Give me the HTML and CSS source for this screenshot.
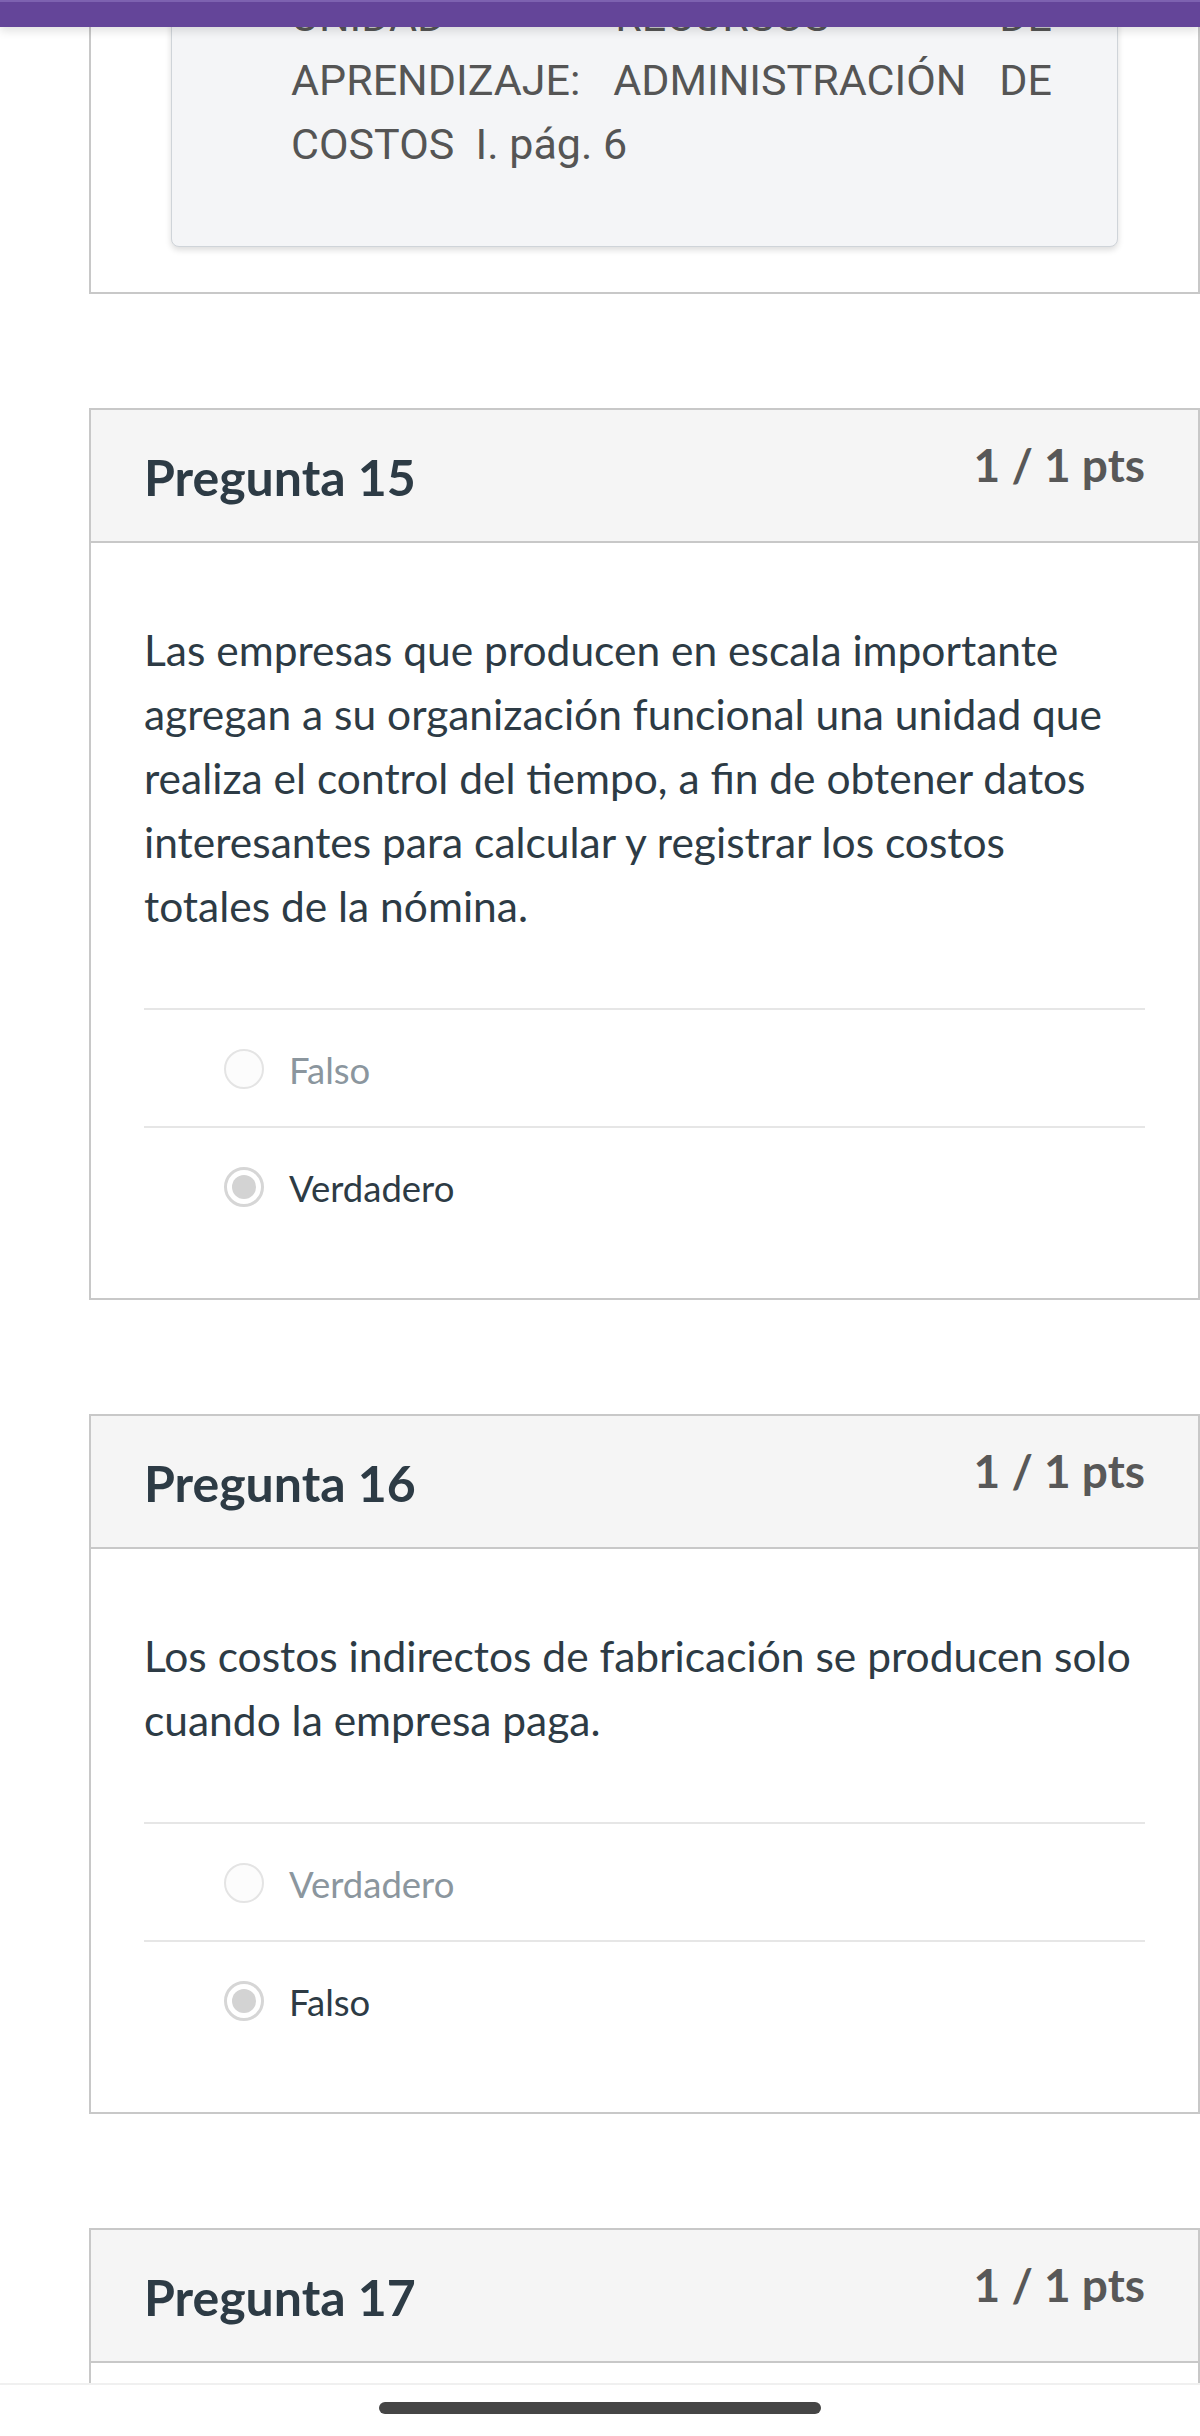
FILE: index.html
```html
<!DOCTYPE html>
<html lang="es">
<head>
<meta charset="utf-8">
<title>Cuestionario</title>
<link rel="stylesheet" href="styles.css">
</head>
<body>
<div class="topbar"></div>
<main class="page">
  <section class="card card-prev">
    <div class="callout">
      <p class="ref-text">
        <span class="ref-line">UNIDAD RECURSOS DE</span>
        <span class="ref-line">APRENDIZAJE: ADMINISTRACIÓN DE</span>
        <span class="ref-line last">COSTOS&nbsp; I. pág. 6</span>
      </p>
    </div>
  </section>

  <section class="card">
    <header class="q-head">
      <h2 class="q-title">Pregunta 15</h2>
      <span class="q-pts">1 / 1 pts</span>
    </header>
    <div class="q-body">
      <p class="q-text">Las empresas que producen en escala importante agregan a su organización funcional una unidad que realiza el control del tiempo, a fin de obtener datos interesantes para calcular y registrar los costos<br>totales de la nómina.</p>
      <div class="answers">
        <div class="answer"><span class="radio"></span><span class="label">Falso</span></div>
        <div class="answer selected"><span class="radio"></span><span class="label">Verdadero</span></div>
      </div>
    </div>
  </section>

  <section class="card">
    <header class="q-head">
      <h2 class="q-title">Pregunta 16</h2>
      <span class="q-pts">1 / 1 pts</span>
    </header>
    <div class="q-body">
      <p class="q-text">Los costos indirectos de fabricación se producen solo cuando la empresa paga.</p>
      <div class="answers">
        <div class="answer"><span class="radio"></span><span class="label">Verdadero</span></div>
        <div class="answer selected"><span class="radio"></span><span class="label">Falso</span></div>
      </div>
    </div>
  </section>

  <section class="card">
    <header class="q-head">
      <h2 class="q-title">Pregunta 17</h2>
      <span class="q-pts">1 / 1 pts</span>
    </header>
    <div class="q-body">
      <p class="q-text">&nbsp;</p>
    </div>
  </section>
</main>
<div class="navbar"><span class="pill"></span></div>
</body>
</html>
```

FILE: styles.css
```css
html, body {
  margin: 0;
  padding: 0;
  height: 2436px;
  overflow: hidden;
  background: #ffffff;
}

body {
  position: relative;
  font-family: Lato, "Open Sans", "Liberation Sans", sans-serif;
  color: #2d3b45;
}

.topbar {
  position: absolute;
  top: 0;
  left: 0;
  right: 0;
  height: 27px;
  background: #644599;
  border-top: 2px solid #7d62b0;
  box-sizing: border-box;
  box-shadow: 0 4px 10px rgba(0, 0, 0, 0.12);
  z-index: 5;
}

.page {
  padding-left: 89px;
}

.card {
  box-sizing: border-box;
  width: 1111px;
  border: 2px solid #c8c8c8;
  background: #ffffff;
}

.card + .card {
  margin-top: 114px;
}

.card-prev {
  margin-top: -60px;
  padding: 0 53px 45px;
}

.callout {
  margin: 0 27px;
  padding: 41px 65px 70px 119px;
  background: #f4f5f7;
  border: 1px solid #cfd4d9;
  border-radius: 8px;
  box-shadow: 0 3px 6px rgba(0, 0, 0, 0.14);
}

.ref-text {
  margin: 0;
  font-family: Roboto, "Liberation Sans", sans-serif;
  font-size: 43px;
  line-height: 64px;
  color: #555555;
}

.ref-line {
  display: block;
  text-align: justify;
  text-align-last: justify;
}

.ref-line.last {
  text-align-last: left;
}

.q-head {
  box-sizing: border-box;
  height: 133px;
  display: flex;
  justify-content: space-between;
  align-items: flex-start;
  padding: 24px 53px 0 53px;
  background: #f5f5f5;
  border-bottom: 2px solid #c8c8c8;
}

.q-title {
  margin: 13px 0 0;
  font-size: 50px;
  line-height: 60px;
  font-weight: 700;
  color: #2d3b45;
}

.q-pts {
  margin-top: 1px;
  font-size: 46px;
  line-height: 60px;
  font-weight: 700;
  color: #585858;
}

.q-body {
  padding: 75px 53px 54px;
}

.q-text {
  margin: 0 0 70px;
  font-size: 42.5px;
  line-height: 64px;
  color: #2d3b45;
}

.answer {
  box-sizing: border-box;
  height: 118px;
  display: flex;
  align-items: flex-start;
  padding-left: 80px;
  border-top: 2px solid #e6e6e6;
}

.radio {
  box-sizing: border-box;
  flex: none;
  width: 40px;
  height: 40px;
  margin-top: 39px;
  border-radius: 50%;
  border: 2px solid #e4e4e4;
  background: #fcfcfc;
  position: relative;
}

.answer.selected .radio {
  border: 3px solid #d6d6d6;
  background: #ffffff;
}

.answer.selected .radio::after {
  content: "";
  position: absolute;
  left: 5px;
  top: 5px;
  width: 24px;
  height: 24px;
  border-radius: 50%;
  background: #d3d3d3;
}

.label {
  margin: 39px 0 0 25px;
  font-size: 36.5px;
  line-height: 42px;
  color: #8b969e;
}

.answer.selected .label {
  color: #2d3b45;
}

.navbar {
  position: absolute;
  left: 0;
  right: 0;
  bottom: 0;
  height: 53px;
  background: #ffffff;
  border-top: 2px solid #f0f0f0;
  box-sizing: border-box;
  display: flex;
  justify-content: center;
  z-index: 5;
}

.pill {
  margin-top: 17px;
  width: 442px;
  height: 12px;
  border-radius: 6px;
  background: #454545;
}
```
